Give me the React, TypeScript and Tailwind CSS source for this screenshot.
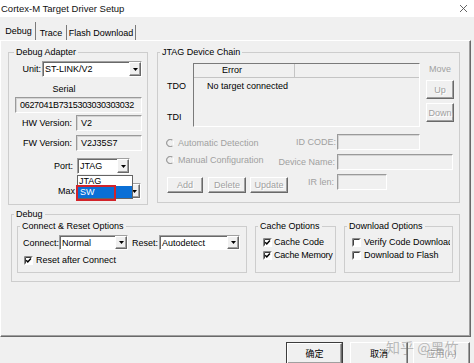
import React from "react";

const sunken =
  "border border-t-[#9a9a9a] border-l-[#9a9a9a] border-r-white border-b-white shadow-[inset_1px_1px_0_#d4d4d4]";
const sunkenDark =
  "border border-t-[#a0a0a0] border-l-[#a0a0a0] border-r-white border-b-white shadow-[inset_1px_1px_0_#696969]";
const raised =
  "border border-t-white border-l-white border-r-[#696969] border-b-[#696969] shadow-[inset_-1px_-1px_0_#a0a0a0] bg-[#f0f0f0]";

function Arrow() {
  return (
    <div className={`w-[12px] h-full flex items-center justify-center ${raised}`}>
      <svg width="5" height="3" viewBox="0 0 5 3">
        <path d="M0 0H5L2.5 3Z" fill="#000" />
      </svg>
    </div>
  );
}

function Select({ value, className }: { value: string; className: string }) {
  return (
    <div className={`flex items-stretch bg-white ${sunkenDark} ${className}`}>
      <div className="flex-1 pl-[2px] flex items-center whitespace-nowrap overflow-hidden">{value}</div>
      <Arrow />
    </div>
  );
}

function Box({ value, className }: { value?: string; className: string }) {
  return (
    <div className={`flex items-center pl-[4px] whitespace-nowrap overflow-hidden ${sunken} ${className}`}>
      {value}
    </div>
  );
}

function Btn({ label, className, disabled }: { label: string; className: string; disabled?: boolean }) {
  return (
    <div
      className={`flex items-center justify-center ${raised} ${className} ${
        disabled ? "text-[#a0a0a0] [text-shadow:1px_1px_0_#fff]" : "text-black"
      }`}
    >
      {label}
    </div>
  );
}

function Check({ checked }: { checked?: boolean }) {
  return (
    <svg width="9" height="9" viewBox="0 0 9 9" className="shrink-0">
      <rect x="0" y="0" width="9" height="9" fill="#fff" />
      <path d="M0.5 8.5V0.5H8.5" stroke="#8a8a8a" fill="none" />
      <path d="M1.5 7.5V1.5H7.5" stroke="#404040" fill="none" />
      {checked && <path d="M2.2 4.2L3.8 5.9L6.9 2.6" stroke="#000" strokeWidth="1.5" fill="none" />}
    </svg>
  );
}

function Radio() {
  return (
    <svg width="8" height="8" viewBox="0 0 8 8" className="shrink-0">
      <path d="M6.6 1.4A3.5 3.5 0 1 0 6.6 6.6" stroke="#a0a0a0" strokeWidth="1.2" fill="none" />
      <path d="M6.6 6.6A3.5 3.5 0 0 0 6.6 1.4" stroke="#ffffff" strokeWidth="1" fill="none" />
    </svg>
  );
}

function Group({
  label,
  className,
  legendClass = "ml-[2px]",
  children,
}: {
  label: string;
  className: string;
  legendClass?: string;
  children?: React.ReactNode;
}) {
  return (
    <fieldset className={`min-w-0 border border-[#cdcdcd] ${className}`}>
      <legend className={`px-[2px] leading-[12px] whitespace-nowrap ${legendClass}`}>{label}</legend>
      {children}
    </fieldset>
  );
}

export default function App() {
  return (
    <div className="relative w-[474px] h-[363px] overflow-hidden bg-[#f0f0f0] text-black font-['Liberation_Sans','Noto_Sans_CJK_SC',sans-serif] text-[9px] leading-[12px]">
      {/* title bar */}
      <div className="h-[17px] bg-white flex items-center justify-between pl-[1px] pr-[7px]">
        <span className="text-[9.5px] text-[#111]">Cortex-M Target Driver Setup</span>
        <svg width="7" height="7" viewBox="0 0 7 7">
          <path d="M0 0L7 7M7 0L0 7" stroke="#555" strokeWidth="0.9" />
        </svg>
      </div>

      {/* tabs */}
      <div className="h-[23px] flex items-end pl-[2px]">
        <div className="h-[18px] w-[34px] flex items-center justify-center border-r border-r-[#7a7a7a]">
          Debug
        </div>
        <div className="h-[15px] w-[31px] flex items-center justify-center border-r border-r-[#7a7a7a]">Trace</div>
        <div className="h-[15px] w-[69px] flex items-center justify-center border-r border-r-[#7a7a7a]">
          Flash Download
        </div>
      </div>

      {/* panel */}
      <div className="w-[471px] h-[297px] border border-t-white border-l-white border-r-[#696969] border-b-[#696969] shadow-[inset_-1px_-1px_0_#a0a0a0] pl-[7px] pt-[5px]">
        <div className="flex items-start">
          {/* Debug Adapter */}
          <Group label="Debug Adapter" legendClass="ml-[5px]" className="w-[140px] h-[159px]">
            <div className="mt-[3px] h-[16px] flex items-center">
              <div className="w-[33px] text-right pr-[1px]">Unit:</div>
              <Select value="ST-LINK/V2" className="w-[100px] h-[16px]" />
            </div>
            <div className="mt-[6px] h-[12px] w-[110px] text-center">Serial</div>
            <Box value="0627041B7315303030303032" className="mt-[2px] ml-[6px] w-[127px] h-[16px] tracking-[-0.3px]" />
            <div className="mt-[2px] h-[16px] flex items-center">
              <div className="w-[63px] text-right">HW Version:</div>
              <Box value="V2" className="ml-[4px] w-[66px] h-[16px]" />
            </div>
            <div className="mt-[4px] h-[16px] flex items-center">
              <div className="w-[63px] text-right">FW Version:</div>
              <Box value="V2J35S7" className="ml-[4px] w-[66px] h-[16px]" />
            </div>
            <div className="relative mt-[7px] h-[16px] flex items-center">
              <div className="w-[65px] text-right pr-[1px]">Port:</div>
              <Select value="JTAG" className="ml-[3px] w-[53px] h-[16px]" />
              {/* open drop-down list */}
              <div className="absolute left-[68px] top-[17px] w-[56px] h-[24px] border border-[#646464] bg-white z-10 flex flex-col">
                <div className="h-[10px] leading-[10px] pl-[1px]">JTAG</div>
                <div className="h-[12px] leading-[12px] pl-[2px] bg-[#0a6fd6] text-white">SW</div>
              </div>
              <div className="absolute left-[67px] top-[27px] w-[40px] h-[16px] border-2 border-[#d2232a] z-20" />
            </div>
            <div className="mt-[9px] h-[16px] flex items-center pl-[49px]">
              <div className="w-[47px] whitespace-nowrap overflow-hidden">Max Clock:</div>
              <Select value="1MHz" className="w-[36px] h-[16px]" />
            </div>
          </Group>

          {/* JTAG Device Chain */}
          <Group label="JTAG Device Chain" className="ml-[9px] w-[303px] h-[157px]">
            <div className="mt-[5px] flex h-[64px]">
              <div className="w-[35px] pl-[9px] flex flex-col">
                <div className="mt-[17px] h-[12px]">TDO</div>
                <div className="mt-[19px] h-[12px]">TDI</div>
              </div>
              <div className="w-[227px] h-[64px] border border-t-[#7a7a7a] border-l-[#7a7a7a] border-r-white border-b-white flex flex-col">
                <div className="h-[14px] flex border-b border-b-[#c4c4c4]">
                  <div className="w-[101px] border-r border-r-[#c4c4c4] pl-[28px] leading-[13px]">Error</div>
                  <div className="flex-1" />
                </div>
                <div className="mt-[2px] pl-[13px] h-[12px]">No target connected</div>
              </div>
              <div className="ml-[6px] w-[28px] flex flex-col">
                <div className="h-[12px] text-center text-[#a0a0a0]">Move</div>
                <Btn label="Up" disabled className="mt-[5px] h-[19px] w-[28px]" />
                <Btn label="Down" disabled className="mt-[4px] h-[19px] w-[28px]" />
              </div>
            </div>
            <div className="mt-[7px] flex">
              <div className="w-[112px] shrink-0 pl-[8px] flex flex-col">
                <div className="mt-[3px] h-[12px] flex items-center text-[#a0a0a0] whitespace-nowrap">
                  <Radio />
                  <span className="ml-[4px]">Automatic Detection</span>
                </div>
                <div className="mt-[5px] h-[12px] flex items-center text-[#a0a0a0] whitespace-nowrap">
                  <Radio />
                  <span className="ml-[4px]">Manual Configuration</span>
                </div>
                <div className="mt-[11px] ml-[1px] flex">
                  <Btn label="Add" disabled className="shrink-0 w-[36px] h-[16px]" />
                  <Btn label="Delete" disabled className="shrink-0 ml-[5px] w-[38px] h-[16px]" />
                  <Btn label="Update" disabled className="shrink-0 ml-[4px] w-[38px] h-[16px]" />
                </div>
              </div>
              <div className="w-[183px] shrink-0 flex flex-col text-[#a0a0a0]">
                <div className="h-[16px] flex items-center">
                  <div className="w-[67px] text-right pr-[1px]">ID CODE:</div>
                  <Box className="w-[83px] h-[16px]" />
                </div>
                <div className="mt-[4px] h-[16px] flex items-center">
                  <div className="w-[67px] text-right pr-[2px] whitespace-nowrap">Device Name:</div>
                  <Box className="w-[116px] h-[16px]" />
                </div>
                <div className="mt-[4px] h-[16px] flex items-center">
                  <div className="w-[67px] text-right pr-[3px]">IR len:</div>
                  <Box className="w-[50px] h-[16px]" />
                </div>
              </div>
            </div>
          </Group>
        </div>

        {/* Debug */}
        <Group label="Debug" className="ml-[3px] mt-[3px] w-[449px] h-[74px]">
          <div className="flex items-start">
            <Group label="Connect & Reset Options" className="ml-[5px] w-[230px] h-[53px]">
              <div className="mt-[3px] h-[15px] flex items-center">
                <div className="w-[41px] pl-[5px]">Connect:</div>
                <Select value="Normal" className="w-[69px] h-[15px]" />
                <div className="w-[31px] text-right pr-[1px]">Reset:</div>
                <Select value="Autodetect" className="w-[81px] h-[15px]" />
              </div>
              <div className="mt-[4px] h-[12px] pl-[6px] flex items-center">
                <Check checked />
                <span className="ml-[3px]">Reset after Connect</span>
              </div>
            </Group>
            <Group label="Cache Options" className="ml-[8px] w-[81px] h-[53px]">
              <div className="mt-[4px] h-[12px] pl-[7px] flex items-center whitespace-nowrap">
                <Check checked />
                <span className="ml-[2px]">Cache Code</span>
              </div>
              <div className="mt-[1px] h-[12px] pl-[7px] flex items-center whitespace-nowrap">
                <Check checked />
                <span className="ml-[2px] tracking-[-0.2px]">Cache Memory</span>
              </div>
            </Group>
            <Group label="Download Options" className="ml-[8px] w-[109px] h-[53px]">
              <div className="mt-[4px] h-[12px] w-[105px] pl-[7px] flex items-center overflow-hidden whitespace-nowrap">
                <Check />
                <span className="ml-[3px]">Verify Code Download</span>
              </div>
              <div className="mt-[1px] h-[12px] pl-[7px] flex items-center whitespace-nowrap">
                <Check />
                <span className="ml-[3px]">Download to Flash</span>
              </div>
            </Group>
          </div>
        </Group>
      </div>

      {/* bottom buttons */}
      <div className="mt-[5px] flex justify-end pr-[4px] h-[23px] text-[9px]">
        <div className="w-[57px] h-[23px] border border-[#3c3c3c] flex">
          <Btn label="确定" className="flex-1 h-full" />
        </div>
        <Btn label="取消" className="ml-[7px] w-[58px] h-[23px]" />
        <Btn label="应用(A)" disabled className="ml-[5px] w-[57px] h-[23px]" />
      </div>

      {/* watermark */}
      <div className="absolute left-[386px] top-[339px] text-[14px] leading-[16px] text-[rgba(110,110,110,0.45)] whitespace-nowrap font-['Noto_Sans_CJK_SC',sans-serif]">
        知乎 @黑竹
      </div>
    </div>
  );
}
